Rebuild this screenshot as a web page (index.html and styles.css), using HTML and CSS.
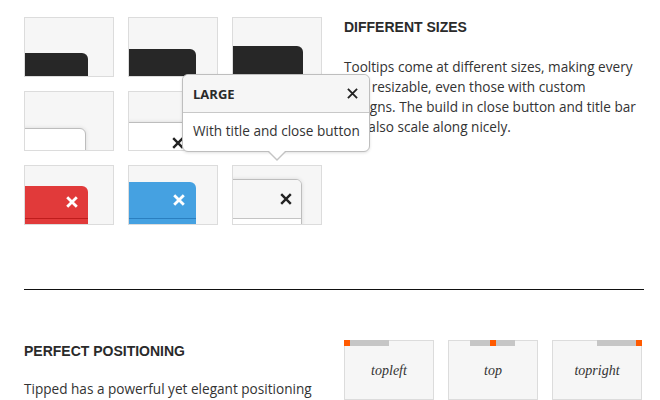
FILE: index.html
```html
<!DOCTYPE html>
<html>
<head>
<meta charset="utf-8">
<link rel="stylesheet" href="styles.css">
</head>
<body>
<div class="page">
  <section class="band band-top">
    <div class="demo">
      <div class="grid">
        <div class="cell"><div class="mini dark s1"></div></div>
        <div class="cell"><div class="mini dark s2"></div></div>
        <div class="cell"><div class="mini dark s3"></div></div>

        <div class="cell"><div class="mini light l1"></div></div>
        <div class="cell"><div class="mini light l2"><div class="bar"><svg class="x" viewBox="0 0 12 12"><path d="M1.2 1.2L10.8 10.8M10.8 1.2L1.2 10.8"/></svg></div></div></div>
        <div class="cell"><div class="mini light l3"><div class="bar tinted"><svg class="x" viewBox="0 0 12 12"><path d="M1.2 1.2L10.8 10.8M10.8 1.2L1.2 10.8"/></svg></div></div></div>

        <div class="cell"><div class="mini red c1"><div class="bar"><svg class="x white" viewBox="0 0 12 12"><path d="M1.2 1.2L10.8 10.8M10.8 1.2L1.2 10.8"/></svg></div></div></div>
        <div class="cell"><div class="mini blue c2"><div class="bar"><svg class="x white" viewBox="0 0 12 12"><path d="M1.2 1.2L10.8 10.8M10.8 1.2L1.2 10.8"/></svg></div></div></div>
        <div class="cell"><div class="mini light c3"><div class="bar tinted"><svg class="x" viewBox="0 0 12 12"><path d="M1.2 1.2L10.8 10.8M10.8 1.2L1.2 10.8"/></svg></div></div></div>
      </div>
      <div class="tip">
        <div class="tip-title">
          <span>LARGE</span>
          <svg class="tip-close" viewBox="0 0 12 12"><path d="M1 1L11 11M11 1L1 11"/></svg>
        </div>
        <div class="tip-body">With title and close button</div>
      </div>
    </div>
    <div class="copy">
      <h2>DIFFERENT SIZES</h2>
      <p>Tooltips come at different sizes, making every one resizable, even those with custom designs. The build in close button and title bar will also scale along nicely.</p>
    </div>
  </section>
  <hr class="rule">
  <section class="band band-bottom">
    <div class="copy">
      <h2>PERFECT POSITIONING</h2>
      <p>Tipped has a powerful yet elegant positioning system that lets you place tooltips anywhere.</p>
    </div>
    <div class="positions">
      <div class="pos pos-left"><span class="marker"></span><em>topleft</em></div>
      <div class="pos pos-center"><span class="marker"></span><em>top</em></div>
      <div class="pos pos-right"><span class="marker"></span><em>topright</em></div>
    </div>
  </section>
</div>
</body>
</html>
```

FILE: styles.css
```css
html, body {
  margin: 0;
  padding: 0;
  background: #fff;
}
.page {
  padding: 17px 0 0 24px;
  width: 620px;
  color: #333;
  font-family: "Open Sans", "DejaVu Sans", sans-serif;
  font-size: 13.6px;
}
.band {
  display: flex;
  gap: 22px;
}
.demo {
  position: relative;
  width: 298px;
  flex: none;
}
.grid {
  display: grid;
  grid-template-columns: repeat(3, 90px);
  grid-auto-rows: 60px;
  gap: 14px;
}
.cell {
  box-sizing: border-box;
  border: 1px solid #dcdcdc;
  background: #f6f6f6;
  overflow: hidden;
  display: flex;
  flex-direction: column;
  align-items: flex-start;
}
.mini {
  flex: none;
  box-sizing: border-box;
  height: 80px;
  margin-left: -11px;
  border-radius: 0 6px 0 0;
}
.dark { background: #272727; }
.light {
  background: #fff;
  border: 1px solid #bdbdbd;
  box-shadow: 0 0 4px rgba(0,0,0,0.12);
}
.red { background: #e13a3a; }
.blue { background: #45a1e1; }
.s1 { margin-top: 35px; width: 74px; }
.s2 { margin-top: 31px; width: 78px; }
.s3 { margin-top: 28px; width: 81px; }
.l1 { margin-top: 36px; width: 72px; }
.l2 { margin-top: 30px; width: 78px; }
.l3 { margin-top: 26px; width: 80px; }
.c1 { margin-top: 20px; width: 74px; }
.c2 { margin-top: 16px; width: 78px; }
.c3 { margin-top: 13px; width: 80px; }

.bar {
  display: flex;
  justify-content: flex-end;
  align-items: center;
  box-sizing: border-box;
}
.c1 .bar { height: 33px; padding-right: 10px; border-bottom: 1px solid #bf1c1c; }
.c2 .bar { height: 37px; padding-right: 11px; border-bottom: 1px solid #2a7fc0; }
.c3 .bar { height: 39px; padding-right: 9px; border-bottom: 1px solid #c4c4c4; }
.l2 .bar { height: 40px; padding-right: 11px; }
.l3 .bar { height: 40px; padding-right: 9px; border-bottom: 1px solid #c4c4c4; }
.bar.tinted { background: #f6f6f6; border-radius: 0 5px 0 0; }
.x {
  width: 12px;
  height: 12px;
  fill: none;
  stroke: #222;
  stroke-width: 2.4;
}
.x.white { stroke: #fff; stroke-width: 2.8; }

.tip {
  position: absolute;
  z-index: 2;
  left: 158px;
  top: 57px;
  width: 188px;
  box-sizing: border-box;
  background: #fff;
  border: 1px solid #bebebe;
  border-radius: 6px;
  box-shadow: 0 1px 3px rgba(0,0,0,0.12);
}
.tip::before,
.tip::after {
  content: "";
  position: absolute;
  left: 85px;
  width: 0;
  height: 0;
  border-left: 9px solid transparent;
  border-right: 9px solid transparent;
}
.tip::before {
  bottom: -10px;
  border-top: 9px solid #c4c4c4;
}
.tip::after {
  bottom: -8px;
  border-top: 9px solid #fff;
}
.tip-title {
  display: flex;
  justify-content: space-between;
  align-items: center;
  height: 38px;
  box-sizing: border-box;
  padding: 0 11px 0 10px;
  background: #f6f6f6;
  border-bottom: 1px solid #c8c8c8;
  border-radius: 6px 6px 0 0;
  font-weight: bold;
  font-size: 13px;
  color: #2a2a2a;
}
.tip-close {
  width: 11px;
  height: 11px;
  fill: none;
  stroke: #222;
  stroke-width: 2;
}
.tip-body {
  height: 38px;
  box-sizing: border-box;
  padding: 8px 10px 0;
  line-height: 20px;
  white-space: nowrap;
}

.copy h2 {
  margin: 2px 0 0;
  font-family: "Liberation Sans", Arial, sans-serif;
  font-size: 14px;
  line-height: 16px;
  font-weight: bold;
  color: #2a2a2a;
}
.copy p {
  margin: 22px 0 0;
  line-height: 20px;
}
.band-top .copy { width: 296px; }

.rule {
  margin: 64px 0 0;
  border: 0;
  border-top: 1px solid #111;
  width: 620px;
  height: 0;
}
.band-bottom { margin-top: 50px; }
.band-bottom .copy { width: 298px; flex: none; }
.band-bottom .copy h2 { margin-top: 3px; }
.band-bottom .copy p { margin-top: 20px; }

.positions {
  display: flex;
  gap: 14px;
}
.pos {
  position: relative;
  width: 90px;
  height: 60px;
  box-sizing: border-box;
  border: 1px solid #dcdcdc;
  background: #f6f6f6;
  text-align: center;
  padding-top: 19px;
}
.pos em {
  font-family: "Liberation Serif", "Times New Roman", serif;
  font-size: 14px;
  line-height: 20px;
  color: #333;
}
.marker {
  position: absolute;
  top: -1px;
  width: 45px;
  height: 6px;
  background: #c6c6c6;
}
.marker::after {
  content: "";
  position: absolute;
  top: 0;
  width: 6px;
  height: 6px;
  background: #ff5a00;
}
.pos-left .marker { left: -1px; }
.pos-left .marker::after { left: 0; }
.pos-center .marker { left: 21px; }
.pos-center .marker::after { left: 20px; }
.pos-right .marker { right: -1px; }
.pos-right .marker::after { right: 0; }
```
